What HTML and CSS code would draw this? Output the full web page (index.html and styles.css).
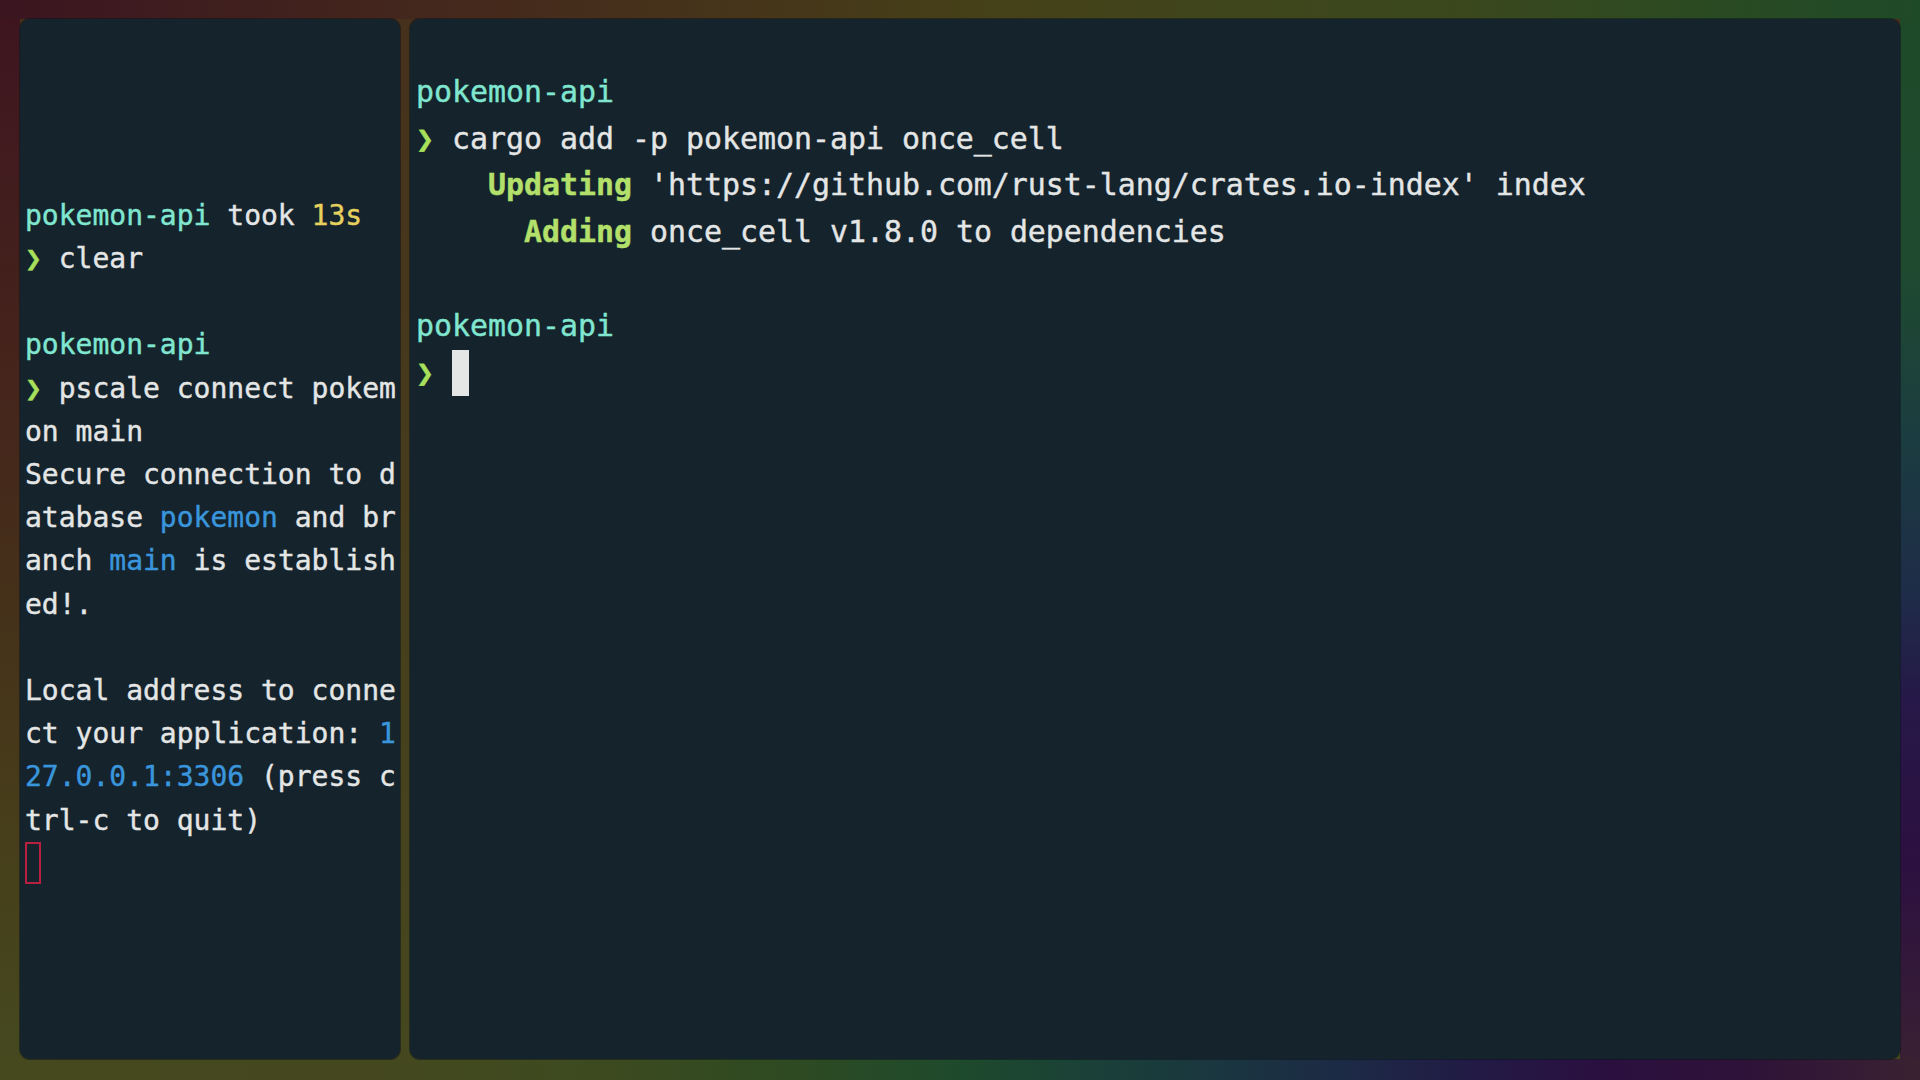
FILE: index.html
```html
<!DOCTYPE html>
<html lang="en">
<head>
    <meta charset="UTF-8">
    <meta name="viewport" content="width=device-width, initial-scale=1.0">
    <title>pokemon-api terminal</title>
    <link rel="stylesheet" href="styles.css">
</head>
<body>
    <!-- 左侧终端：pscale 连接 -->
    <div class="pane pane-left">
<pre class="term term-small">




<span class="dir">pokemon-api</span> took <span class="dur">13s</span>
<span class="arrow">❯</span> clear

<span class="dir">pokemon-api</span>
<span class="arrow">❯</span> pscale connect pokem
on main
Secure connection to d
atabase <span class="hl">pokemon</span> and br
anch <span class="hl">main</span> is establish
ed!.

Local address to conne
ct your application: <span class="hl">1</span>
<span class="hl">27.0.0.1:3306</span> (press c
trl-c to quit)
<span class="cursor cursor-idle"></span></pre>
    </div>

    <!-- 右侧终端：cargo -->
    <div class="pane pane-right">
<pre class="term term-large">

<span class="dir">pokemon-api</span>
<span class="arrow">❯</span> cargo add -p pokemon-api once_cell
    <span class="status">Updating</span> 'https://github.com/rust-lang/crates.io-index' index
      <span class="status">Adding</span> once_cell v1.8.0 to dependencies

<span class="dir">pokemon-api</span>
<span class="arrow">❯</span> <span class="cursor cursor-active"></span></pre>
    </div>
</body>
</html>
```

FILE: styles.css
```css
html, body {
    height: 100%;
}

body {
    margin: 0;
    display: flex;
    gap: 10px;
    padding: 19px 20px 21px;
    box-sizing: border-box;
    background:
        linear-gradient(to right, #3b1520, #40201e 13%, #452a1c 26%, #46341a 38%, #454018 51%, #40461c 64%, #3a481e 77%, #2a4a22 89%, #1f4a28) top / 100% 19px no-repeat,
        linear-gradient(to right, #46491e, #45481e 19%, #3c4a1f 32%, #2e4a22 41%, #1e4a2c 50%, #1a4038 57%, #1a3540 64%, #1c2a45 70%, #221a45 77%, #2a1040 83%, #2e1238 91%, #3a2232) bottom / 100% 21px no-repeat,
        linear-gradient(to bottom, #3e1520, #45221c 30%, #45301a 55%, #473d1a 75%, #454a1f) left / 20px 100% no-repeat,
        linear-gradient(to bottom, #1f4a28, #1f4a30 25%, #1b3d40 40%, #1e2c48 55%, #261848 65%, #2c1040 80%, #3a2232) right / 20px 100% no-repeat,
        linear-gradient(to bottom, #46301c, #463d1c 50%, #45481f);
    color: #e4e6e6;
}

.pane {
    background-color: #15232d;
    border-radius: 10px;
    overflow: hidden;
    box-shadow: 0 0 0 1px rgba(10, 18, 24, 0.5);
}

.pane-left {
    width: 380px;
    flex-shrink: 0;
}

.pane-right {
    flex: 1;
}

.term {
    margin: 0;
    font-family: "DejaVu Sans Mono", "Liberation Mono", monospace;
    white-space: pre;
    -webkit-text-stroke: 0.4px currentColor;
}

.term-small {
    font-size: 28px;
    line-height: 43.2px;
    padding: 2px 5px;
}

.term-large {
    font-size: 29.9px;
    line-height: 46.8px;
    padding: 3px 6px;
}

.dir {
    color: #80e6d0;
}

.dur {
    color: #e6d15e;
}

.arrow {
    color: #a8e05c;
    font-weight: bold;
}

.hl {
    color: #3a96dc;
}

.status {
    color: #b3e06b;
    font-weight: bold;
}

.cursor {
    display: inline-block;
    vertical-align: top;
    box-sizing: border-box;
}

.cursor-idle {
    width: 16px;
    height: 42px;
    border: 2px solid #b8203f;
}

.cursor-active {
    width: 17px;
    height: 46px;
    background-color: #e4e6e6;
}
```
